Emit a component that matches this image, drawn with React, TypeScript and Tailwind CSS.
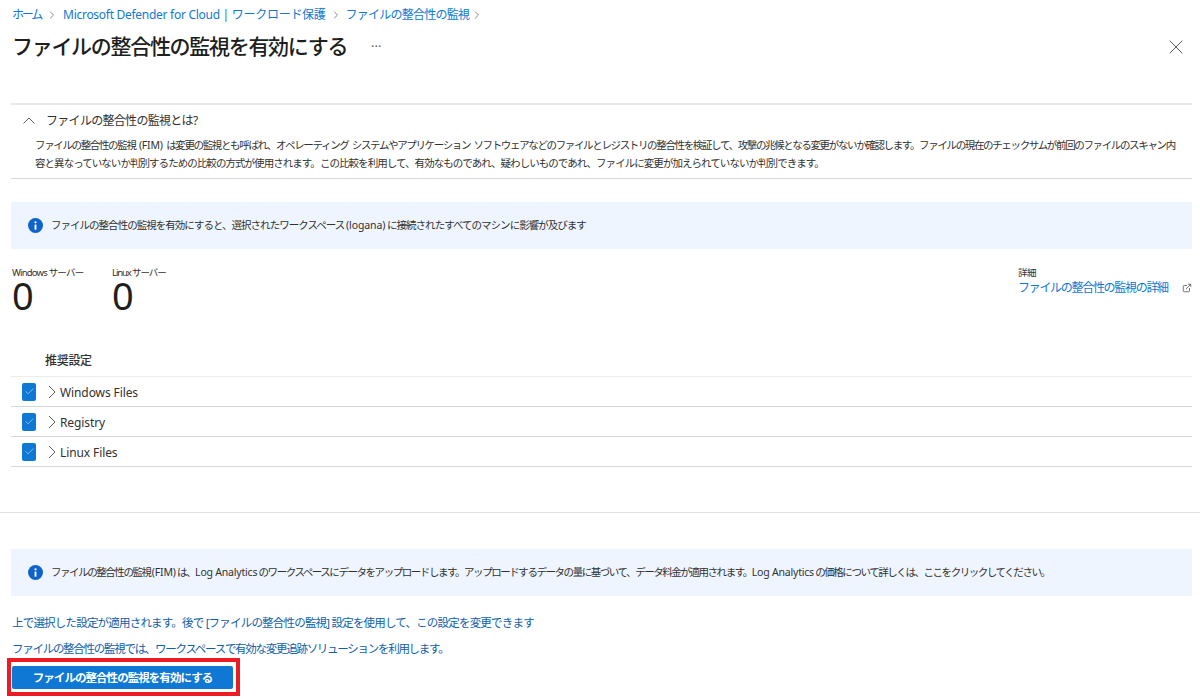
import { Check, ChevronRight, ExternalLink, X } from "lucide-react";

const rows = ["Windows Files", "Registry", "Linux Files"];

const InfoIcon = () => (
  <svg viewBox="0 0 16 16" className="h-[15px] w-[15px] shrink-0">
    <circle cx="8" cy="8" r="8" fill="#0f62c9" />
    <rect x="7" y="7" width="2" height="5.5" fill="#fff" />
    <circle cx="8" cy="4.6" r="1.2" fill="#fff" />
  </svg>
);

export default function App() {
  return (
    <div className="h-[699px] w-[1200px] overflow-hidden bg-white font-['Noto_Sans','Noto_Sans_CJK_JP',sans-serif] text-[#323130]">
      {/* Breadcrumb */}
      <div className="flex h-[30px] items-center pl-[12px] text-[12px] text-[#0f78d4]">
        <span className="tracking-[-2.2px]">ホーム</span>
        <ChevronRight className="mx-[5px] h-3 w-3 text-[#8a8886]" />
        <span className="tracking-[-0.28px]">Microsoft Defender for Cloud | ワークロード保護</span>
        <ChevronRight className="mx-[4px] h-3 w-3 text-[#8a8886]" />
        <span className="tracking-[-0.75px]">ファイルの整合性の監視</span>
        <ChevronRight className="mx-[2px] h-3 w-3 text-[#8a8886]" />
      </div>

      {/* Title */}
      <div className="flex h-[33px] items-center pl-[12px] pr-[12px]">
        <h1 className="text-[21px] font-medium tracking-[-1.3px] text-[#201f1e]">ファイルの整合性の監視を有効にする</h1>
        <span className="ml-[24px] text-[13px] text-[#605e5c]">···</span>
        <X className="ml-auto h-6 w-6 text-[#605e5c]" strokeWidth={1} />
      </div>

      <div className="pl-[11px] pr-[8px] pt-[40px]">
        {/* Accordion */}
        <div className="h-[76px] border-t-2 border-b border-t-[#e8e8e8] border-b-[#d6d6d6]">
          <div className="flex h-[31px] items-center pl-[12px]">
            <svg viewBox="0 0 12 7" className="h-[7px] w-[12px] fill-none stroke-[#605e5c]">
              <path d="M0.5 6.5 L6 1 L11.5 6.5" />
            </svg>
            <span className="ml-[11px] text-[12px] tracking-[-0.7px]">ファイルの整合性の監視とは?</span>
          </div>
          <div className="pl-[24px] text-[10.5px] leading-[18px]">
            <p className="whitespace-nowrap tracking-[-1.36px] [word-spacing:2px]">ファイルの整合性の監視 <span className="tracking-[-0.2px]">(FIM)</span> は変更の監視とも呼ばれ、オペレーティング システムやアプリケーション ソフトウェアなどのファイルとレジストリの整合性を検証して、攻撃の兆候となる変更がないか確認します。ファイルの現在のチェックサムが前回のファイルのスキャン内</p>
            <p className="whitespace-nowrap tracking-[-0.95px]">容と異なっていないか判別するための比較の方式が使用されます。この比較を利用して、有効なものであれ、疑わしいものであれ、ファイルに変更が加えられていないか判別できます。</p>
          </div>
        </div>

        <div className="pt-[23px]">
          <div className="flex h-[47px] items-center bg-[#eef5fe] pl-[17px]">
            <InfoIcon />
            <span className="ml-[8px] whitespace-nowrap text-[10.5px] tracking-[-0.98px]">ファイルの整合性の監視を有効にすると、選択されたワークスペース <span className="tracking-[-0.1px]">(logana)</span> に接続されたすべてのマシンに影響が及びます</span>
          </div>
        </div>

        {/* Counts */}
        <div className="flex h-[68px] pl-[1px] pt-[17px]">
          <div className="w-[100px]">
            <div className="text-[9.5px] leading-[13px] tracking-[-0.8px]">Windows サーバー</div>
            <div className="text-[38px] leading-[33px] text-[#201f1e]">0</div>
          </div>
          <div>
            <div className="text-[9.5px] leading-[13px] tracking-[-1.1px]">Linux サーバー</div>
            <div className="text-[38px] leading-[33px] text-[#201f1e]">0</div>
          </div>
          <div className="ml-auto w-[174px]">
            <div className="text-[9.5px] leading-[13px] tracking-[-0.5px]">詳細</div>
            <div className="mt-[1px] flex items-center text-[12px] leading-[15px] tracking-[-1.3px] text-[#0f78d4]">
              <span>ファイルの整合性の監視の詳細</span>
              <ExternalLink className="ml-auto h-[10px] w-[10px] text-[#605e5c]" />
            </div>
          </div>
        </div>

        {/* Recommended settings */}
        <div className="flex h-[59px] items-end pb-[6px] pl-[34px] text-[12px] font-medium tracking-[-0.3px]">推奨設定</div>
        <div className="border-t border-[#ececec]">
          {rows.map((name) => (
            <div key={name} className="flex h-[30px] items-center border-b border-[#d6d6d6] pl-[11px]">
              <div className="flex h-[18px] w-[14px] items-center justify-center rounded-[2px] bg-[#0f78d4]">
                <Check className="h-[11px] w-[11px] text-[#b5d7f3]" strokeWidth={1.5} />
              </div>
              <svg viewBox="0 0 8 14" className="ml-[12px] h-[14px] w-[8px] fill-none stroke-[#605e5c]">
                <path d="M1 1 L7 7 L1 13" />
              </svg>
              <span className="ml-[4px] pt-[2px] text-[12px] tracking-[-0.1px]">{name}</span>
            </div>
          ))}
        </div>
      </div>

      <div className="mt-[45px] border-t border-[#e1e1e1]" />

      <div className="pl-[11px] pr-[8px] pt-[36px]">
        <div className="flex h-[47px] items-center bg-[#eef5fe] pl-[17px]">
          <InfoIcon />
          <span className="ml-[8px] whitespace-nowrap pt-[1px] text-[10.5px] tracking-[-1.45px]">ファイルの整合性の監視 <span className="tracking-[-0.2px]">(FIM)</span> は、<span className="tracking-[-0.2px]">Log Analytics</span> のワークスペースにデータをアップロードします。アップロードするデータの量に基づいて、データ料金が適用されます。<span className="tracking-[-0.2px]">Log Analytics</span> の価格について詳しくは、ここをクリックしてください。</span>
        </div>
        <p className="mt-[19px] pl-[1px] text-[11.5px] leading-[16px] tracking-[-0.8px] text-[#0f5ea8]">上で選択した設定が適用されます。後で [ファイルの整合性の監視] 設定を使用して、この設定を変更できます</p>
        <p className="mt-[10px] pl-[1px] text-[11.5px] leading-[16px] tracking-[-1.28px] text-[#0f5ea8]">ファイルの整合性の監視では、ワークスペースで有効な変更追跡ソリューションを利用します。</p>
        <div className="-ml-[4px] mt-[1px] w-[233px] border-4 border-[#ed1c24] pb-[3px] pl-[1px] pr-[3px] pt-[4px]">
          <button className="flex h-[23px] w-full items-center justify-center rounded-[2px] bg-[#0f78d4] text-[11.5px] font-semibold tracking-[-0.95px] text-white">ファイルの整合性の監視を有効にする</button>
        </div>
      </div>
    </div>
  );
}
